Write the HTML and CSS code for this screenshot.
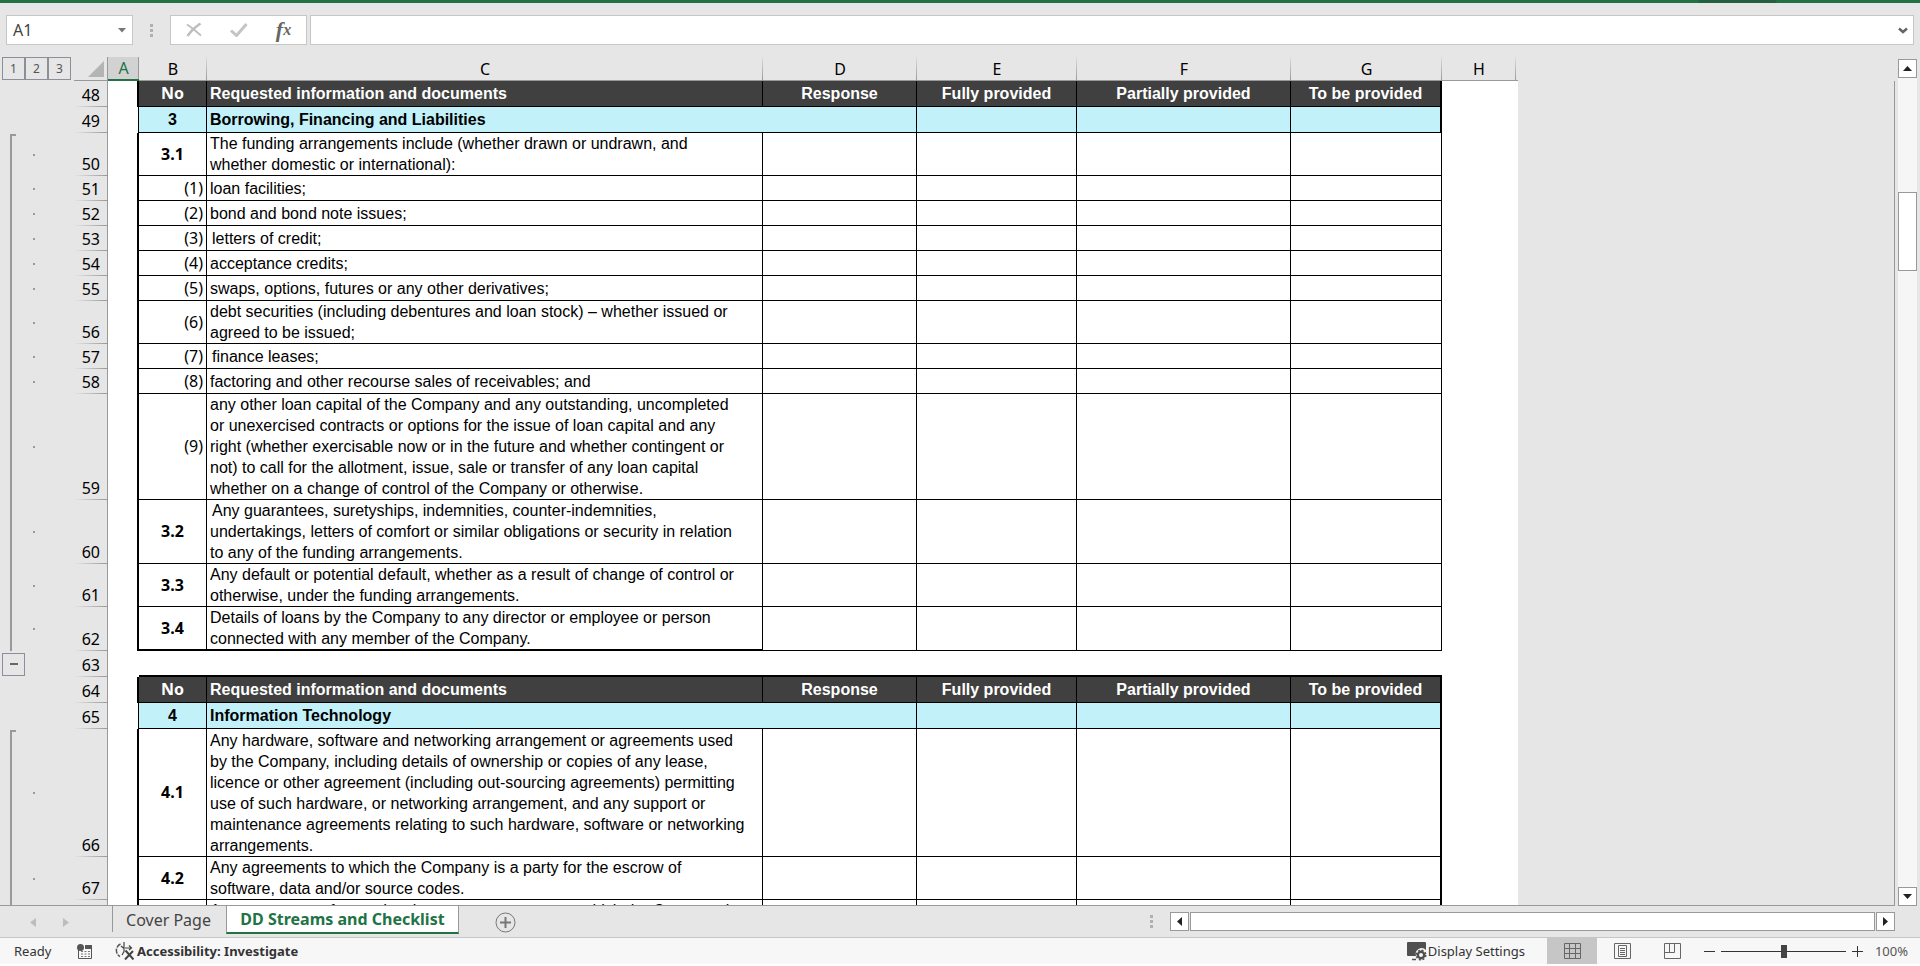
FILE: index.html
```html
<!DOCTYPE html>
<html lang="en">
<head>
<meta charset="utf-8">
<title>DD Streams and Checklist</title>
<link rel="stylesheet" href="styles.css">
</head>
<body>
<div class="titlebar-edge"></div>

<header class="formula-bar">
  <button class="name-box" type="button" aria-label="Name box"><span>A1</span><svg width="8" height="5" viewBox="0 0 8 5"><path d="M0 0h8L4 4.5z" fill="#777"/></svg></button>
  <div class="grip"><i></i><i></i><i></i></div>
  <div class="formula-tools">
    <button type="button" aria-label="Cancel"><svg width="16" height="14" viewBox="0 0 16 14"><path d="M1 1.500c5 3 9 7 14 11" stroke="#bdbdbd" stroke-width="1.800" fill="none"/><path d="M14.500 .5C9 4 5 8 1.500 13" stroke="#bdbdbd" stroke-width="2.600" fill="none"/></svg></button>
    <button type="button" aria-label="Enter"><svg width="18" height="14" viewBox="0 0 18 14"><path d="M1 7.500l5.500 5L16.500 1" stroke="#c4c4c4" stroke-width="3" fill="none"/></svg></button>
    <button type="button" aria-label="Insert function" class="fx">f<sub>x</sub></button>
  </div>
  <div class="formula-field">
    <input type="text" aria-label="Formula">
    <svg width="10" height="7" viewBox="0 0 10 7"><path d="M1 1.500l4 3.500 4-3.500" stroke="#666" stroke-width="2.500" fill="none"/></svg>
  </div>
</header>

<main class="workspace">
  <div class="sheet-view">
    <table class="sheet">
      <colgroup><col class="w-outline"><col class="w-num"><col class="w-a"><col class="w-b"><col class="w-c"><col class="w-d"><col class="w-e"><col class="w-f"><col class="w-g"><col class="w-h"><col class="w-tail"></colgroup>
      <thead>
        <tr class="columns">
          <td class="levels"><div><button type="button">1</button><button type="button">2</button><button type="button">3</button></div></td>
          <td class="corner"><svg width="16" height="16" viewBox="0 0 16 16"><path d="M16 0v16H0z" fill="#b4b4b4"/></svg></td>
          <th class="selected" scope="col">A</th><th scope="col">B</th><th scope="col">C</th><th scope="col">D</th><th scope="col">E</th><th scope="col">F</th><th scope="col">G</th><th scope="col">H</th><td class="tail"></td>
        </tr>
      </thead>
      <tbody>
        <tr class="band dark edge"><td class="o"></td><th class="n">48</th><td class="a"></td><td class="b">No</td><td class="c">Requested information and documents</td><td>Response</td><td>Fully provided</td><td>Partially provided</td><td class="g">To be provided</td><td class="h" colspan="2"></td></tr>
        <tr class="band blue edge"><td class="o"></td><th class="n">49</th><td class="a"></td><td class="b">3</td><td class="c" colspan="2">Borrowing, Financing and Liabilities</td><td></td><td></td><td class="g"></td><td class="h" colspan="2"></td></tr>
        <tr class="two"><td class="o group first"></td><th class="n">50</th><td class="a"></td><td class="b">3.1</td><td class="c">The funding arrangements include (whether drawn or undrawn, and<br>whether domestic or international):</td><td></td><td></td><td></td><td class="g"></td><td class="h" colspan="2"></td></tr>
        <tr class="one"><td class="o group"></td><th class="n">51</th><td class="a"></td><td class="b">(1)</td><td class="c">loan facilities;</td><td></td><td></td><td></td><td class="g"></td><td class="h" colspan="2"></td></tr>
        <tr class="one"><td class="o group"></td><th class="n">52</th><td class="a"></td><td class="b">(2)</td><td class="c">bond and bond note issues;</td><td></td><td></td><td></td><td class="g"></td><td class="h" colspan="2"></td></tr>
        <tr class="one"><td class="o group"></td><th class="n">53</th><td class="a"></td><td class="b">(3)</td><td class="c indent">letters of credit;</td><td></td><td></td><td></td><td class="g"></td><td class="h" colspan="2"></td></tr>
        <tr class="one"><td class="o group"></td><th class="n">54</th><td class="a"></td><td class="b">(4)</td><td class="c">acceptance credits;</td><td></td><td></td><td></td><td class="g"></td><td class="h" colspan="2"></td></tr>
        <tr class="one"><td class="o group"></td><th class="n">55</th><td class="a"></td><td class="b">(5)</td><td class="c">swaps, options, futures or any other derivatives;</td><td></td><td></td><td></td><td class="g"></td><td class="h" colspan="2"></td></tr>
        <tr class="one two"><td class="o group"></td><th class="n">56</th><td class="a"></td><td class="b">(6)</td><td class="c">debt securities (including debentures and loan stock) – whether issued or<br>agreed to be issued;</td><td></td><td></td><td></td><td class="g"></td><td class="h" colspan="2"></td></tr>
        <tr class="one"><td class="o group"></td><th class="n">57</th><td class="a"></td><td class="b">(7)</td><td class="c indent">finance leases;</td><td></td><td></td><td></td><td class="g"></td><td class="h" colspan="2"></td></tr>
        <tr class="one"><td class="o group"></td><th class="n">58</th><td class="a"></td><td class="b">(8)</td><td class="c">factoring and other recourse sales of receivables; and</td><td></td><td></td><td></td><td class="g"></td><td class="h" colspan="2"></td></tr>
        <tr class="one five"><td class="o group"></td><th class="n">59</th><td class="a"></td><td class="b">(9)</td><td class="c">any other loan capital of the Company and any outstanding, uncompleted<br>or unexercised contracts or options for the issue of loan capital and any<br>right (whether exercisable now or in the future and whether contingent or<br>not) to call for the allotment, issue, sale or transfer of any loan capital<br>whether on a change of control of the Company or otherwise.</td><td></td><td></td><td></td><td class="g"></td><td class="h" colspan="2"></td></tr>
        <tr class="three"><td class="o group"></td><th class="n">60</th><td class="a"></td><td class="b">3.2</td><td class="c indent-first">Any guarantees, suretyships, indemnities, counter-indemnities,<br>undertakings, letters of comfort or similar obligations or security in relation<br>to any of the funding arrangements.</td><td></td><td></td><td></td><td class="g"></td><td class="h" colspan="2"></td></tr>
        <tr class="two"><td class="o group"></td><th class="n">61</th><td class="a"></td><td class="b">3.3</td><td class="c">Any default or potential default, whether as a result of change of control or<br>otherwise, under the funding arrangements.</td><td></td><td></td><td></td><td class="g"></td><td class="h" colspan="2"></td></tr>
        <tr class="two last"><td class="o group"></td><th class="n">62</th><td class="a"></td><td class="b">3.4</td><td class="c">Details of loans by the Company to any director or employee or person<br>connected with any member of the Company.</td><td></td><td></td><td></td><td class="g"></td><td class="h" colspan="2"></td></tr>
        <tr class="blank"><td class="o"><button type="button" class="collapse" aria-label="Collapse group"></button></td><th class="n">63</th><td class="a"></td><td class="b"></td><td></td><td></td><td></td><td></td><td class="g"></td><td class="h" colspan="2"></td></tr>
        <tr class="band dark edge"><td class="o"></td><th class="n">64</th><td class="a"></td><td class="b">No</td><td class="c">Requested information and documents</td><td>Response</td><td>Fully provided</td><td>Partially provided</td><td class="g">To be provided</td><td class="h" colspan="2"></td></tr>
        <tr class="band blue edge"><td class="o"></td><th class="n">65</th><td class="a"></td><td class="b">4</td><td class="c" colspan="2">Information Technology</td><td></td><td></td><td class="g"></td><td class="h" colspan="2"></td></tr>
        <tr class="six edge"><td class="o group first"></td><th class="n">66</th><td class="a"></td><td class="b">4.1</td><td class="c">Any hardware, software and networking arrangement or agreements used<br>by the Company, including details of ownership or copies of any lease,<br>licence or other agreement (including out-sourcing agreements) permitting<br>use of such hardware, or networking arrangement, and any support or<br>maintenance agreements relating to such hardware, software or networking<br>arrangements.</td><td></td><td></td><td></td><td class="g"></td><td class="h" colspan="2"></td></tr>
        <tr class="two edge"><td class="o group"></td><th class="n">67</th><td class="a"></td><td class="b">4.2</td><td class="c">Any agreements to which the Company is a party for the escrow of<br>software, data and/or source codes.</td><td></td><td></td><td></td><td class="g"></td><td class="h" colspan="2"></td></tr>
        <tr class="two edge partial"><td class="o group"></td><th class="n"></th><td class="a"></td><td class="b"></td><td class="c">Any computer software development agreements to which the Company is</td><td></td><td></td><td></td><td class="g"></td><td class="h" colspan="2"></td></tr>
      </tbody>
    </table>
  </div>
  <div class="vscroll">
    <button type="button" aria-label="Scroll up"><svg width="9" height="5" viewBox="0 0 9 5"><path d="M0 5h9L4.500 0z" fill="#222"/></svg></button>
    <div class="track"><div class="thumb"></div></div>
    <button type="button" aria-label="Scroll down"><svg width="9" height="5" viewBox="0 0 9 5"><path d="M0 0h9L4.500 5z" fill="#222"/></svg></button>
  </div>
</main>

<nav class="tabs">
  <div class="tab-nav">
    <button type="button" aria-label="Previous sheet"><svg width="6" height="9" viewBox="0 0 6 9"><path d="M6 0v9L0 4.500z" fill="#bdbdbd"/></svg></button>
    <button type="button" aria-label="Next sheet"><svg width="6" height="9" viewBox="0 0 6 9"><path d="M0 0v9l6-4.500z" fill="#bdbdbd"/></svg></button>
  </div>
  <button type="button" class="tab">Cover Page</button>
  <button type="button" class="tab active">DD Streams and Checklist</button>
  <button type="button" class="add" aria-label="New sheet"><svg width="21" height="21" viewBox="0 0 21 21"><circle cx="10.500" cy="10.500" r="9.500" stroke="#777" fill="none"/><path d="M10.500 5v11M5 10.500h11" stroke="#777" stroke-width="2"/></svg></button>
  <div class="grip"><i></i><i></i><i></i></div>
  <div class="hscroll">
    <button type="button" aria-label="Scroll left"><svg width="5" height="9" viewBox="0 0 5 9"><path d="M5 0v9L0 4.500z" fill="#222"/></svg></button>
    <div class="hthumb"></div>
    <button type="button" aria-label="Scroll right"><svg width="5" height="9" viewBox="0 0 5 9"><path d="M0 0v9l5-4.500z" fill="#222"/></svg></button>
  </div>
</nav>

<footer class="status">
  <span class="ready">Ready</span>
  <button type="button" class="macro" aria-label="Record macro"><svg width="15" height="15" viewBox="0 0 15 15"><path d="M1.500 6v8.500h13V1.500" fill="none" stroke="#555"/><path d="M8 1h7v4H8z" fill="#555"/><circle cx="3.500" cy="3.500" r="3.500" fill="#555"/><path d="M4 7.500h2M7.500 7.500h2M11 7.500h2M4 10h2M7.500 10h2M11 10h2M4 12.500h2M7.500 12.500h2M11 12.500h2" stroke="#777"/></svg></button>
  <button type="button" class="access"><svg width="20" height="18" viewBox="0 0 20 18"><path d="M5.500 2A7 7 0 0 0 5 14.500" stroke="#555" stroke-width="1.500" stroke-dasharray="5 1.200" fill="none"/><path d="M9 0v6M6 4l3 2.500v3l-2 3.500M10 6h6M14 3.500l2.500 2.500L14 8" stroke="#444" stroke-width="1.200" fill="none"/><path d="M10.500 8.500l8 9M18 9l-8 8.500" stroke="#444" stroke-width="2"/></svg>Accessibility: Investigate</button>
  <button type="button" class="display"><svg width="20" height="19" viewBox="0 0 20 19"><path d="M1 0h17a1 1 0 0 1 1 1v7a6 6 0 0 0-10 6H1a1 1 0 0 1-1-1V1a1 1 0 0 1 1-1z" fill="#505050"/><path d="M5 17.500h4" stroke="#505050" stroke-width="1.500"/><circle cx="14" cy="13" r="3.200" fill="none" stroke="#505050" stroke-width="2.400"/><circle cx="14" cy="13" r="4.800" fill="none" stroke="#505050" stroke-width="1.400" stroke-dasharray="2 1.770"/></svg>Display Settings</button>
  <button type="button" class="view on" aria-label="Normal"><svg width="17" height="16" viewBox="0 0 17 16"><path d="M.5.5h16v15H.5zM5.500.5v15M11.500.5v15M.5 5.500h16M.5 10.500h16" fill="none" stroke="#666"/></svg></button>
  <button type="button" class="view" aria-label="Page layout"><svg width="17" height="16" viewBox="0 0 17 16"><path d="M.5.5h16v15H.5zM4.500 2.500h8v11h-8zM6 5.500h5M6 7.500h5M6 9.500h5M6 11.500h5" fill="none" stroke="#666"/></svg></button>
  <button type="button" class="view" aria-label="Page break preview"><svg width="17" height="16" viewBox="0 0 17 16"><path d="M.5.5h16v15H.5zM.5 9.500h10V.5M5.500.5v9" fill="none" stroke="#666"/></svg></button>
  <div class="zoom">
    <button type="button" aria-label="Zoom out"><svg width="11" height="11" viewBox="0 0 11 11"><path d="M0 5.500h11" stroke="#333"/></svg></button>
    <input type="range" min="0" max="100" value="50" aria-label="Zoom">
    <button type="button" aria-label="Zoom in"><svg width="11" height="11" viewBox="0 0 11 11"><path d="M0 5.500h11M5.500 0v11" stroke="#333"/></svg></button>
  </div>
  <button type="button" class="percent">100%</button>
</footer>
</body>
</html>
```
FILE: styles.css
```css
* { box-sizing: border-box; }
body {
  margin: 0;
  height: 100vh;
  display: flex;
  flex-direction: column;
  overflow: hidden;
  background: #e6e6e6;
  color: #000;
  font-family: "Noto Sans", "Open Sans", sans-serif;
  font-size: 16px;
}
button {
  margin: 0;
  padding: 0;
  border: 0;
  background: none;
  font: inherit;
  color: inherit;
  display: flex;
  align-items: center;
  justify-content: center;
}
.titlebar-edge {
  flex: none;
  height: 3px;
  background: linear-gradient(90deg, transparent 1698px, #25603f 1700px 1775px, transparent 1777px) #217346;
}

/* Formula bar */
.formula-bar {
  flex: none;
  display: flex;
  align-items: stretch;
  height: 54px;
  padding: 12px 6px 12px 6px;
}
.name-box {
  width: 127px;
  padding: 0 6px;
  justify-content: space-between;
  background: #fff;
  border: 1px solid #c6c6c6;
  color: #444;
}
.grip { display: flex; flex-direction: column; justify-content: center; gap: 2px; }
.grip i { width: 3px; height: 3px; background: #b0b0b0; }
.formula-bar .grip { width: 37px; align-items: center; }
.formula-tools {
  width: 137px;
  display: flex;
  background: #fff;
  border: 1px solid #c6c6c6;
  margin-right: 3px;
}
.formula-tools button { flex: 1; }
.formula-tools .fx { font: italic 700 22px/22px "Liberation Serif", serif; color: #666; }
.fx sub { font-size: 16px; line-height: 16px; }
.formula-field {
  flex: 1;
  display: flex;
  align-items: center;
  padding-right: 5px;
  background: #fff;
  border: 1px solid #c6c6c6;
}
.formula-field input { flex: 1; border: 0; outline: 0; background: none; }

/* Sheet */
.workspace { flex: 1; min-height: 0; display: flex; }
.sheet-view {
  flex: 1;
  min-width: 0;
  overflow: hidden;
  border-bottom: 1px solid #999;
  background: linear-gradient(#999, #999) right 0 top 24px / 1px 100% no-repeat;
}
.sheet { table-layout: fixed; width: 1518px; border-collapse: separate; border-spacing: 0; }
.w-outline { width: 74px; }
.w-num { width: 34px; }
.w-a { width: 31px; }
.w-b { width: 68px; }
.w-c { width: 556px; }
.w-d { width: 154px; }
.w-e { width: 160px; }
.w-f { width: 214px; }
.w-g { width: 151px; }
.w-h { width: 74px; }
.w-tail { width: 2px; }
.sheet td, .sheet th { padding: 0; line-height: 21px; white-space: nowrap; }

.columns { height: 24px; }
.columns th {
  font-weight: 400;
  vertical-align: bottom;
  border-bottom: 1px solid #999;
  background: linear-gradient(#ddd, #999) right / 1px 100% no-repeat;
}
.columns th.selected {
  color: #217346;
  border-bottom: 2px solid #217346;
  background: linear-gradient(#999, #999) right / 1px 100% no-repeat, #d2d2d2;
}
.levels div { display: flex; height: 24px; padding: 0 0 1px 2px; }
.levels button { width: 23px; height: 23px; border: 1px solid #8a8f99; font-size: 12px; color: #555; }
.corner { border-bottom: 1px solid #999; border-right: 1px solid #999; text-align: right; vertical-align: bottom; }
.corner svg { display: block; margin: 0 3px 3px auto; }
.tail { border-bottom: 1px solid #999; }

.one { height: 25px; }
.band, .blank { height: 26px; }
.two { height: 43px; }
.three { height: 64px; }
.last { height: 44px; }
.five { height: 106px; }
.six { height: 128px; }

tbody td {
  background: #fff;
  border-right: 1px solid #000;
  border-bottom: 1px solid #000;
  font-family: "Liberation Sans", Arial, sans-serif;
  text-align: center;
  vertical-align: middle;
}
tbody .n {
  font-weight: 400;
  text-align: right;
  vertical-align: bottom;
  border-right: 1px solid #999;
  background: linear-gradient(90deg, #e6e6e6, #999) bottom / 100% 1px no-repeat;
}
.sheet .n { padding: 0 7px 1px 0; }
tbody .a { border-right-width: 2px; border-bottom: 0; }
tbody .b { font-family: "Noto Sans", "Open Sans", sans-serif; font-weight: 700; }
.sheet .one .b { font-weight: 400; text-align: right; padding-right: 3px; }
.sheet .c { text-align: left; padding-left: 3px; }
.sheet .c.indent { padding-left: 5px; }
.sheet .indent-first { text-indent: 2px; }
tbody .h { border: 0; }
.dark td { background: #404040; color: #fff; font-weight: 700; }
.blue td { background: #c2f1f9; font-weight: 700; }
.blue .b { font-family: "Liberation Sans", Arial, sans-serif; }
.blue .a { border-right-width: 1px; }
.band .a, .band .h { background: #fff; }
.edge .g { border-right-width: 2px; }
.last .b, .last .c { border-bottom-width: 2px; }
.blank td { border-right: 0; border-bottom-width: 2px; }
.blank .h, .blank .a { border-bottom: 0; }
.partial .c { vertical-align: top; }

/* Outline gutter */
tbody .o { border: 0; background: none; }
tbody .group {
  background:
    linear-gradient(#999, #999) 10px 0 / 2px 100% no-repeat,
    linear-gradient(#999, #999) 33px 50% / 2px 2px no-repeat;
}
tbody .group.first {
  background:
    linear-gradient(#999, #999) 10px 1px / 2px 100% no-repeat,
    linear-gradient(#999, #999) 10px 1px / 6px 2px no-repeat,
    linear-gradient(#999, #999) 33px 50% / 2px 2px no-repeat;
}
tbody .partial .group { background: linear-gradient(#999, #999) 10px 0 / 2px 100% no-repeat; }
.collapse { width: 23px; height: 23px; margin-left: 2px; border: 1px solid #8a8f99; background: linear-gradient(#666, #666) center / 8px 2px no-repeat; }

/* Vertical scroll bar */
.vscroll { width: 25px; flex: none; display: flex; flex-direction: column; padding: 2px 3px 0 3px; }
.vscroll button { height: 19px; background: #fff; border: 1px solid #999; }
.track { flex: 1; background: #f6f6f6; padding-top: 114px; }
.thumb { height: 79px; background: #fff; border: 1px solid #999; }

/* Sheet tabs */
.tabs { flex: none; display: flex; height: 31px; padding-right: 25px; }
.tab-nav { width: 113px; height: 26px; border-right: 1px solid #999; display: flex; align-items: center; gap: 27px; padding: 6px 0 0 30px; }
.tab { width: 113px; height: 28px; padding-right: 2px; color: #444; }
.tab.active { width: 233px; padding-right: 0; font-weight: 700; color: #217346; background: #fff; border: 1px solid #999; border-top: 0; border-bottom: 2px solid #217346; }
.add { margin-left: 36px; height: 32px; }
.tabs .grip { margin-left: auto; width: 20px; }
.hscroll { flex: 0 1 725px; display: flex; gap: 1px; height: 19px; margin-top: 6px; }
.hscroll button { width: 19px; flex: none; background: #fff; border: 1px solid #999; }
.hthumb { flex: 1; background: #fff; border: 1px solid #999; }

/* Status bar */
.status {
  flex: none;
  display: flex;
  height: 29px;
  align-items: stretch;
  background: #f7f7f7;
  border-top: 1px solid #c6c6c6;
  border-bottom: 2px solid #fff;
  font-size: 13px;
  color: #333;
}
.ready { width: 76px; padding-left: 14px; line-height: 26px; }
.macro { width: 16px; }
.access { margin-left: 23px; gap: 2px; font-weight: 700; }
.display { margin-left: auto; gap: 1px; }
.view { width: 50px; }
.view.on { background: #c6c6c6; margin-left: 22px; }
.zoom { display: flex; align-items: center; gap: 6px; margin-left: 7px; }
.zoom input { appearance: none; width: 125px; height: 13px; margin: 0; background: linear-gradient(#333, #333) center / 100% 1px no-repeat; }
.zoom input::-webkit-slider-thumb { appearance: none; width: 6px; height: 13px; background: #444; border-radius: 0; }
.percent { width: 57px; color: #555; }
```
